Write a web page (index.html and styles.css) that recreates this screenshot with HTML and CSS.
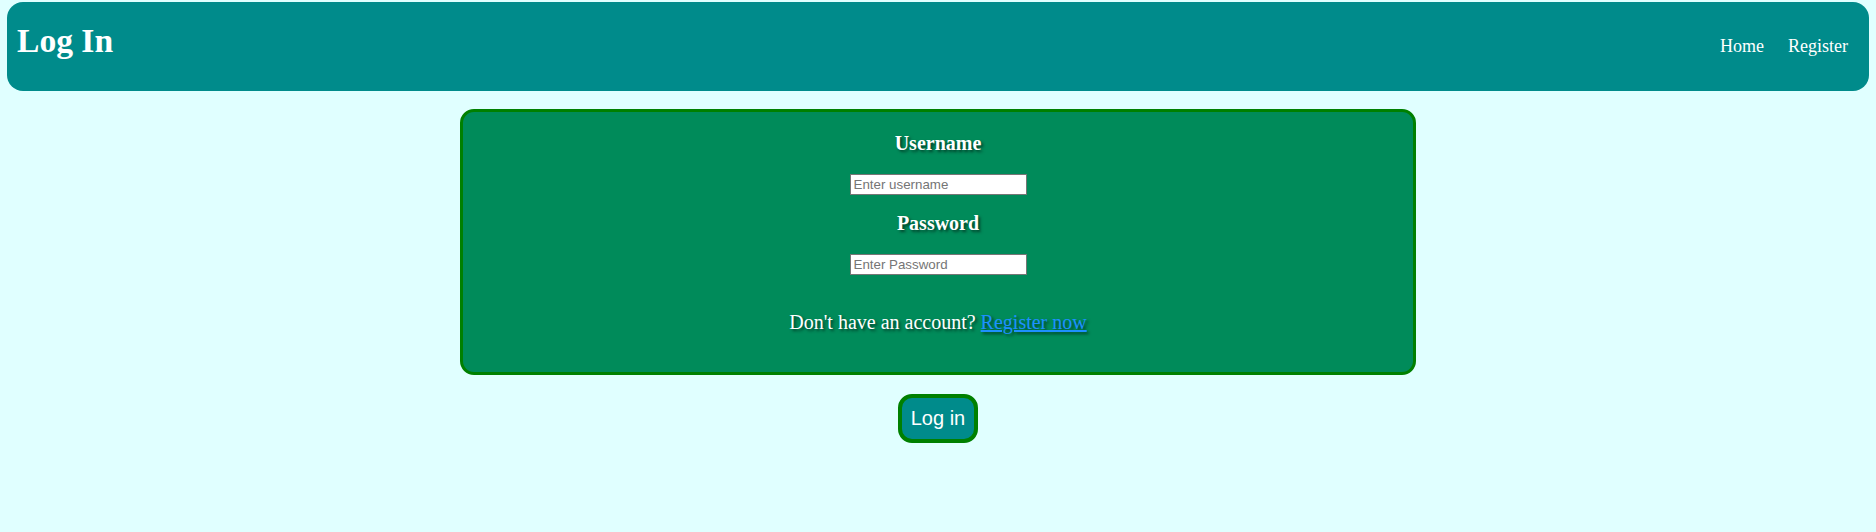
FILE: index.html
```html
<!DOCTYPE html>
<html lang="en">
<head>
<meta charset="utf-8">
<title>Log In</title>
<link rel="stylesheet" href="styles.css">
</head>
<body>
<header class="topbar">
  <h1 class="title">Log In</h1>
  <nav class="nav">
    <a class="nav-link" href="#">Home</a>
    <a class="nav-link" href="#">Register</a>
  </nav>
</header>
<main class="page">
  <form class="card">
    <label class="field-label" for="username">Username</label>
    <input class="field-input" id="username" type="text" placeholder="Enter username">
    <label class="field-label" for="password">Password</label>
    <input class="field-input" id="password" type="password" placeholder="Enter Password">
    <p class="register-text">Don't have an account? <a class="register-link" href="#">Register now</a></p>
  </form>
  <button class="login-btn" type="button">Log in</button>
</main>
</body>
</html>
```

FILE: styles.css
```css
html, body {
  margin: 0;
  padding: 0;
}
body {
  background: #e0ffff;
  font-family: "Liberation Serif", "Times New Roman", serif;
  color: #fff;
}
.topbar {
  margin: 2px 7px 0;
  height: 89px;
  box-sizing: border-box;
  padding: 19px 21px 0 10px;
  background: #008b8b;
  border-radius: 16px;
  display: flex;
  justify-content: space-between;
  align-items: baseline;
}
.title {
  margin: 0;
  font-size: 33.6px;
  line-height: 40px;
  font-weight: bold;
  color: #fff;
}
.nav {
  display: flex;
  gap: 24px;
  align-items: baseline;
}
.nav-link {
  font-size: 18px;
  color: #fff;
  text-decoration: none;
}
.page {
  display: flex;
  flex-direction: column;
  align-items: center;
}
.card {
  margin: 18px 0 0;
  width: 956px;
  box-sizing: border-box;
  border: 3px solid #008000;
  border-radius: 14px;
  background: #008b5a;
  padding: 20px 0 38px;
  display: flex;
  flex-direction: column;
  align-items: center;
}
.field-label {
  font-size: 20px;
  line-height: 23px;
  font-weight: bold;
  color: #fff;
  text-shadow: 2px 2px 3px rgba(0, 0, 0, 0.55);
  margin-bottom: 19px;
}
.field-input {
  width: 177px;
  height: 21px;
  box-sizing: border-box;
  border: 1px solid #767676;
  padding: 1px 3px;
  font-family: "Liberation Sans", Arial, sans-serif;
  font-size: 13.333px;
  background: #fff;
  color: #000;
  margin: 0 0 17px;
}
.field-input::placeholder {
  color: #757575;
}
.register-text {
  margin: 19px 0 0;
  font-size: 20px;
  line-height: 23px;
  color: #fff;
  text-shadow: 2px 2px 3px rgba(0, 0, 0, 0.55);
}
.register-link {
  color: #1e90ff;
  text-decoration: underline;
}
.login-btn {
  margin-top: 19px;
  border: 4px solid #008000;
  border-radius: 14px;
  background: #008b8b;
  color: #fff;
  font-family: "Liberation Sans", Arial, sans-serif;
  font-size: 20px;
  line-height: 23px;
  padding: 9px 9px;
  cursor: pointer;
}
```
